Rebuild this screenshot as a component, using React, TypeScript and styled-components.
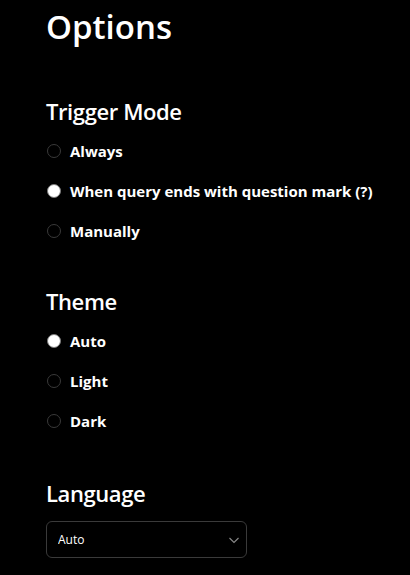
import { useState } from 'react';
import styled, { createGlobalStyle } from 'styled-components';

const GlobalStyle = createGlobalStyle`
  html, body {
    margin: 0;
    background: #000;
  }
  body {
    font-family: 'Open Sans', 'Noto Sans', sans-serif;
    color: #fff;
  }
`;

interface Option {
  value: string;
  label: string;
}

const triggerModes: Option[] = [
  { value: 'always', label: 'Always' },
  { value: 'questionMark', label: 'When query ends with question mark (?)' },
  { value: 'manually', label: 'Manually' },
];

const themes: Option[] = [
  { value: 'auto', label: 'Auto' },
  { value: 'light', label: 'Light' },
  { value: 'dark', label: 'Dark' },
];

interface RadioGroupProps {
  name: string;
  options: Option[];
  value: string;
  onChange: (value: string) => void;
}

const RadioGroup = ({ name, options, value, onChange }: RadioGroupProps) => {
  return (
    <Group>
      {options.map((option) => (
        <RadioRow key={option.value}>
          <RadioInput
            type="radio"
            name={name}
            checked={value === option.value}
            onChange={() => onChange(option.value)}
          />
          <span>{option.label}</span>
        </RadioRow>
      ))}
    </Group>
  );
};

const App = () => {
  const [trigger, setTrigger] = useState('questionMark');
  const [theme, setTheme] = useState('auto');

  return (
    <>
      <GlobalStyle />
      <Page>
        <Title>Options</Title>

        <Section $gap={50}>
          <Heading>Trigger Mode</Heading>
          <RadioGroup name="trigger" options={triggerModes} value={trigger} onChange={setTrigger} />
        </Section>

        <Section $gap={36}>
          <Heading>Theme</Heading>
          <RadioGroup name="theme" options={themes} value={theme} onChange={setTheme} />
        </Section>

        <Section $gap={38}>
          <Heading>Language</Heading>
          <SelectWrap>
            <Select defaultValue="auto">
              <option value="auto">Auto</option>
              <option value="en">English</option>
            </Select>
            <Chevron width="12" height="12" viewBox="0 0 12 12">
              <path d="M1.5 4 L6 8.5 L10.5 4" fill="none" stroke="#8a8a8a" strokeWidth="1.1" />
            </Chevron>
          </SelectWrap>
        </Section>
      </Page>
    </>
  );
};

const Page = styled.div`
  padding: 7px 0 0 46px;
`;

const Title = styled.h1`
  margin: 0;
  font-size: 33px;
  font-weight: 600;
  line-height: 40px;
`;

const Section = styled.section<{ $gap: number }>`
  margin-top: ${(props) => props.$gap}px;
`;

const Heading = styled.h2`
  margin: 0 0 6px;
  font-size: 22px;
  font-weight: 600;
  line-height: 28px;
  letter-spacing: -0.4px;
`;

const Group = styled.div`
  display: flex;
  flex-direction: column;
`;

const RadioRow = styled.label`
  display: flex;
  align-items: center;
  gap: 9px;
  height: 40px;
  font-size: 15px;
  font-weight: 700;
  cursor: pointer;
`;

const RadioInput = styled.input`
  appearance: none;
  margin: 0 0 0 1px;
  width: 14px;
  height: 14px;
  border-radius: 50%;
  border: 1px solid #3a3a3a;
  background: #000;

  &:checked {
    background: #fff;
    border-color: #7a7a7a;
  }
`;

const SelectWrap = styled.div`
  position: relative;
  width: 201px;
  margin-top: 14px;
`;

const Select = styled.select`
  appearance: none;
  width: 100%;
  height: 37px;
  padding: 0 30px 0 11px;
  border: 1px solid #3a3a3a;
  border-radius: 6px;
  background: #000;
  color: #fff;
  font-family: 'Open Sans', 'Noto Sans', sans-serif;
  font-size: 12px;
  outline: none;
`;

const Chevron = styled.svg`
  position: absolute;
  right: 7px;
  top: 13px;
  pointer-events: none;
`;

export default App;
